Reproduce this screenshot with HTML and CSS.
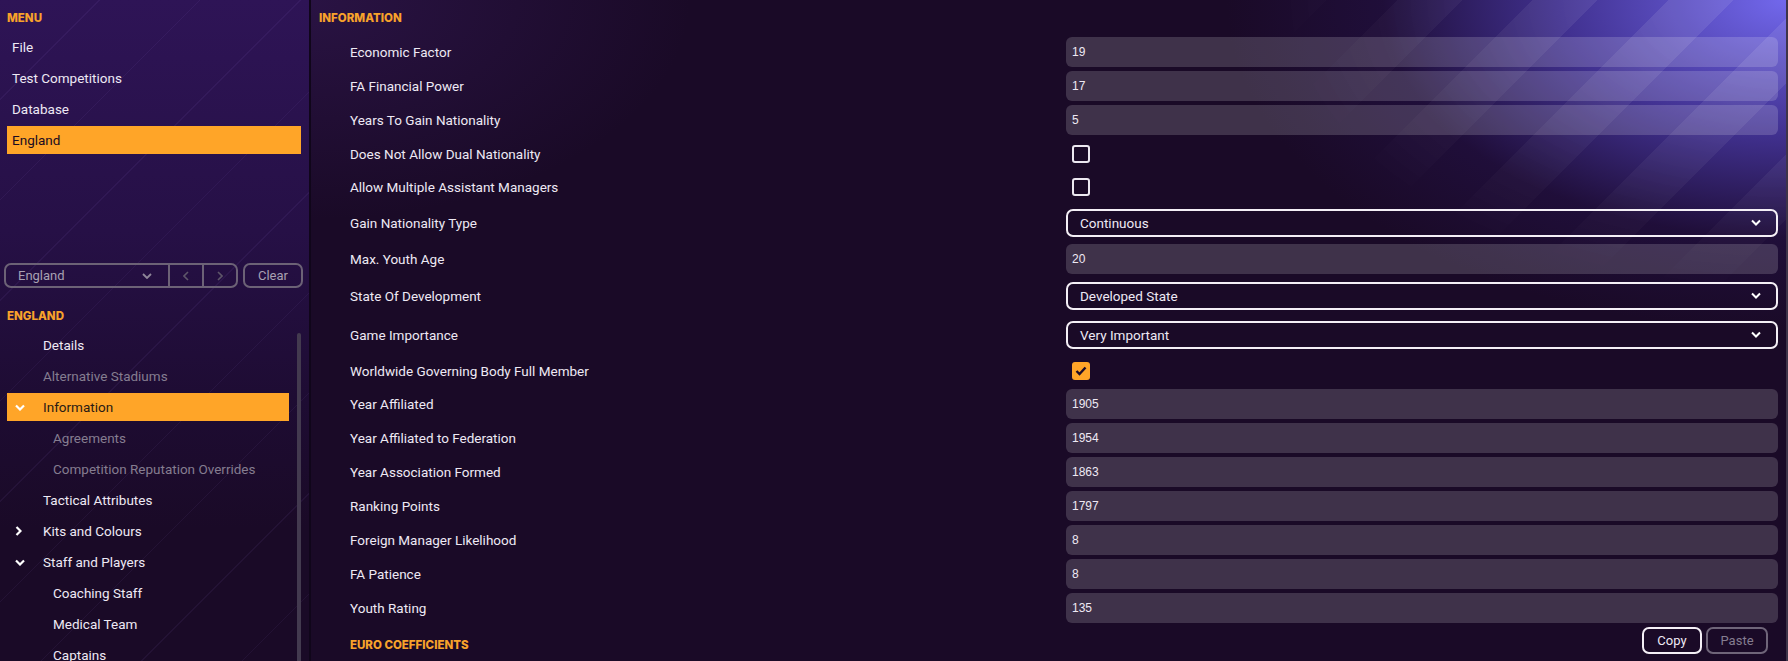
FILE: index.html
```html
<!DOCTYPE html>
<html lang="en">

<head>
    <meta charset="UTF-8">
    <title>Nation Editor - England</title>
    <link rel="stylesheet" href="styles.css">
</head>

<body>
    <div class="app">
        <aside class="sidebar">
            <div class="menu-panel">
                <div class="section-title">Menu</div>
                <ul class="menu">
                    <li class="menu-item">File</li>
                    <li class="menu-item">Test Competitions</li>
                    <li class="menu-item">Database</li>
                    <li class="menu-item active">England</li>
                </ul>
            </div>

            <div class="picker">
                <div class="picker-group">
                    <div class="picker-combo">
                        <span>England</span>
                        <svg width="10" height="6" viewBox="0 0 10 6"><polyline points="1,1 5,5 9,1" fill="none" stroke="#8f8799" stroke-width="1.8"/></svg>
                    </div>
                    <div class="picker-arrow">
                        <svg width="6" height="10" viewBox="0 0 6 10"><polyline points="5,1 1,5 5,9" fill="none" stroke="#5e5669" stroke-width="1.6"/></svg>
                    </div>
                    <div class="picker-arrow">
                        <svg width="6" height="10" viewBox="0 0 6 10"><polyline points="1,1 5,5 1,9" fill="none" stroke="#5e5669" stroke-width="1.6"/></svg>
                    </div>
                </div>
                <div class="picker-clear">Clear</div>
            </div>

            <div class="section-title">England</div>
            <div class="tree-wrap">
                <ul class="tree">
                    <li class="tree-item"><span class="caret"></span>Details</li>
                    <li class="tree-item muted"><span class="caret"></span>Alternative Stadiums</li>
                    <li class="tree-item active">
                        <span class="caret"><svg width="10" height="7" viewBox="0 0 10 7"><polyline points="1,1.5 5,5.5 9,1.5" fill="none" stroke="#fff" stroke-width="2.2"/></svg></span>Information
                    </li>
                    <li class="tree-item sub muted"><span class="caret"></span>Agreements</li>
                    <li class="tree-item sub muted"><span class="caret"></span>Competition Reputation Overrides</li>
                    <li class="tree-item"><span class="caret"></span>Tactical Attributes</li>
                    <li class="tree-item">
                        <span class="caret"><svg width="7" height="10" viewBox="0 0 7 10"><polyline points="1.5,1 5.5,5 1.5,9" fill="none" stroke="#fff" stroke-width="2.2"/></svg></span>Kits and Colours
                    </li>
                    <li class="tree-item">
                        <span class="caret"><svg width="10" height="7" viewBox="0 0 10 7"><polyline points="1,1.5 5,5.5 9,1.5" fill="none" stroke="#fff" stroke-width="2.2"/></svg></span>Staff and Players
                    </li>
                    <li class="tree-item sub"><span class="caret"></span>Coaching Staff</li>
                    <li class="tree-item sub"><span class="caret"></span>Medical Team</li>
                    <li class="tree-item sub"><span class="caret"></span>Captains</li>
                </ul>
                <div class="scrollbar"></div>
            </div>
        </aside>

        <main class="content">
            <div class="section-title">Information</div>

            <div class="form">
                <div class="row">
                    <label>Economic Factor</label>
                    <div class="field">19</div>
                </div>
                <div class="row">
                    <label>FA Financial Power</label>
                    <div class="field">17</div>
                </div>
                <div class="row">
                    <label>Years To Gain Nationality</label>
                    <div class="field">5</div>
                </div>
                <div class="row row-check">
                    <label>Does Not Allow Dual Nationality</label>
                    <div><span class="checkbox"></span></div>
                </div>
                <div class="row row-check">
                    <label>Allow Multiple Assistant Managers</label>
                    <div><span class="checkbox"></span></div>
                </div>
                <div class="row row-select">
                    <label>Gain Nationality Type</label>
                    <div class="select">
                        <span>Continuous</span>
                        <svg width="10" height="7" viewBox="0 0 10 7"><polyline points="1,1.5 5,5.5 9,1.5" fill="none" stroke="#fff" stroke-width="2"/></svg>
                    </div>
                </div>
                <div class="row">
                    <label>Max. Youth Age</label>
                    <div class="field">20</div>
                </div>
                <div class="row row-select">
                    <label>State Of Development</label>
                    <div class="select">
                        <span>Developed State</span>
                        <svg width="10" height="7" viewBox="0 0 10 7"><polyline points="1,1.5 5,5.5 9,1.5" fill="none" stroke="#fff" stroke-width="2"/></svg>
                    </div>
                </div>
                <div class="row row-select">
                    <label>Game Importance</label>
                    <div class="select">
                        <span>Very Important</span>
                        <svg width="10" height="7" viewBox="0 0 10 7"><polyline points="1,1.5 5,5.5 9,1.5" fill="none" stroke="#fff" stroke-width="2"/></svg>
                    </div>
                </div>
                <div class="row row-check">
                    <label>Worldwide Governing Body Full Member</label>
                    <div>
                        <span class="checkbox checked">
                            <svg width="12" height="10" viewBox="0 0 12 10"><polyline points="1.5,5 4.5,8 10.5,1.5" fill="none" stroke="#1b0b29" stroke-width="2.4"/></svg>
                        </span>
                    </div>
                </div>
                <div class="row">
                    <label>Year Affiliated</label>
                    <div class="field">1905</div>
                </div>
                <div class="row">
                    <label>Year Affiliated to Federation</label>
                    <div class="field">1954</div>
                </div>
                <div class="row">
                    <label>Year Association Formed</label>
                    <div class="field">1863</div>
                </div>
                <div class="row">
                    <label>Ranking Points</label>
                    <div class="field">1797</div>
                </div>
                <div class="row">
                    <label>Foreign Manager Likelihood</label>
                    <div class="field">8</div>
                </div>
                <div class="row">
                    <label>FA Patience</label>
                    <div class="field">8</div>
                </div>
                <div class="row">
                    <label>Youth Rating</label>
                    <div class="field">135</div>
                </div>
            </div>

            <div class="form-footer">
                <div class="section-title sub-title">Euro Coefficients</div>
                <div class="actions">
                    <div class="btn">Copy</div>
                    <div class="btn disabled">Paste</div>
                </div>
            </div>
        </main>
    </div>
</body>

</html>
```

FILE: styles.css
```css
:root {
    --color-bg: #1a0a27;
    --color-text: #eee9f4;
    --color-text-muted: #857d90;
    --color-accent: #ffa528;
    --color-title: #f8a22b;
    --color-field: rgba(255, 255, 255, 0.165);
    --color-border: #6c6276;
    --font-ui: Roboto, "Liberation Sans", sans-serif;
    --font-title: Inter, "Liberation Sans", sans-serif;
    --font-value: "Liberation Sans", Arial, sans-serif;
}

html,
body {
    margin: 0;
    height: 100%;
}

body {
    background-color: var(--color-bg);
    color: var(--color-text);
    font-family: var(--font-ui);
    font-size: 13.5px;
    overflow: hidden;
}

ul {
    list-style: none;
    margin: 0;
    padding: 0;
}

.app {
    display: flex;
    height: 661px;
}

.section-title {
    box-sizing: border-box;
    height: 33px;
    line-height: 30px;
    padding: 3px 0 0 7px;
    color: var(--color-title);
    font-family: var(--font-title);
    font-size: 11.5px;
    font-weight: 800;
    text-transform: uppercase;
}

/* Sidebar */

.sidebar {
    width: 309px;
    flex-shrink: 0;
    border-right: 2px solid #10061a;
    display: flex;
    flex-direction: column;
    background:
        repeating-linear-gradient(135deg, transparent 0 70px, rgba(160, 120, 230, 0.07) 70px 71px),
        linear-gradient(to bottom, #2e1456 0, #261046 35%, #1e0c33 60%, var(--color-bg) 80%);
}

.menu-panel {
    height: 263px;
}

.menu-item {
    height: 28px;
    line-height: 28px;
    margin: 0 8px 3px 7px;
    padding-left: 5px;
}

.menu-item.active,
.tree-item.active {
    background-color: var(--color-accent);
    color: #1b0b22;
}

.picker {
    display: flex;
    gap: 5px;
    padding-left: 4px;
    height: 25px;
    font-size: 13px;
}

.picker-group {
    display: flex;
    width: 234px;
    box-sizing: border-box;
    border: 2px solid var(--color-border);
    border-radius: 7px;
}

.picker-combo {
    flex: 1;
    display: flex;
    align-items: center;
    justify-content: space-between;
    padding: 0 16px 0 12px;
    color: #a8a1b2;
}

.picker-arrow {
    width: 32px;
    display: flex;
    align-items: center;
    justify-content: center;
    border-left: 2px solid var(--color-border);
}

.picker-clear {
    width: 60px;
    box-sizing: border-box;
    border: 2px solid var(--color-border);
    border-radius: 7px;
    text-align: center;
    line-height: 21px;
    color: #a8a1b2;
}

.sidebar > .section-title {
    margin-top: 12px;
    height: 31px;
    line-height: 29px;
    padding-top: 2px;
}

.tree-wrap {
    flex: 1;
    display: flex;
    padding-left: 7px;
    min-height: 0;
}

.tree {
    width: 282px;
}

.tree-item {
    display: flex;
    align-items: center;
    height: 28px;
    margin-bottom: 3px;
    padding-left: 8px;
    white-space: nowrap;
}

.tree-item.sub {
    padding-left: 18px;
}

.tree-item.muted {
    color: var(--color-text-muted);
}

.tree-item.active {
    color: #2a1a14;
}

.caret {
    width: 28px;
    flex-shrink: 0;
    display: flex;
    align-items: center;
}

.scrollbar {
    width: 4px;
    margin: 2px 8px 0 8px;
    background-color: #433a4f;
    border-radius: 2px 2px 0 0;
}

/* Main content */

.content {
    flex: 1;
    padding-right: 8px;
    border-right: 2px solid #3e3449;
    background:
        radial-gradient(ellipse 560px 330px at 100% 0%, rgba(114, 104, 236, 1), rgba(82, 66, 190, 0.7) 40%, rgba(44, 24, 100, 0.3) 72%, transparent 100%),
        radial-gradient(ellipse 380px 220px at 0% 0%, rgba(70, 35, 120, 0.35), transparent 100%),
        var(--color-bg);
    position: relative;
}

.content::before {
    content: "";
    position: absolute;
    inset: 0;
    pointer-events: none;
    background: repeating-linear-gradient(135deg, rgba(255, 255, 255, 0.09) 0 46px, transparent 46px 96px);
    -webkit-mask-image: radial-gradient(ellipse 520px 300px at 100% 0%, #000 25%, transparent 100%);
    mask-image: radial-gradient(ellipse 520px 300px at 100% 0%, #000 25%, transparent 100%);
}

.content > .section-title {
    padding-left: 8px;
    margin-bottom: 4px;
}

.form {
    display: flex;
    flex-direction: column;
    gap: 4px;
    position: relative;
}

.row {
    display: grid;
    grid-template-columns: 716px 1fr;
    align-items: center;
    height: 30px;
    padding-left: 39px;
}

.row-check {
    height: 29px;
}

.row-select {
    height: 35px;
}

.field {
    height: 30px;
    line-height: 30px;
    padding-left: 6px;
    border-radius: 6px;
    background-color: var(--color-field);
    font-family: var(--font-value);
    font-size: 12px;
}

.select {
    height: 28px;
    box-sizing: border-box;
    display: flex;
    align-items: center;
    justify-content: space-between;
    padding: 0 15px 0 12px;
    border: 2px solid #f4eff6;
    border-radius: 7px;
}

.checkbox {
    display: flex;
    align-items: center;
    justify-content: center;
    width: 18px;
    height: 18px;
    margin-left: 6px;
    box-sizing: border-box;
    border: 2px solid #ece8f0;
    border-radius: 3px;
}

.checkbox.checked {
    border: none;
    background-color: var(--color-accent);
}

.form-footer {
    display: flex;
    justify-content: space-between;
    align-items: center;
    height: 27px;
    margin-top: 4px;
    position: relative;
}

.sub-title {
    padding: 5px 0 0 39px;
    height: 27px;
    line-height: 27px;
}

.actions {
    display: flex;
    gap: 4px;
    margin-right: 10px;
}

.btn {
    width: 60px;
    height: 27px;
    line-height: 23px;
    box-sizing: border-box;
    border: 2px solid #f4eff6;
    border-radius: 7px;
    text-align: center;
    font-size: 13px;
}

.btn.disabled {
    width: 62px;
    border-color: #6f6579;
    color: #857d90;
}
```
